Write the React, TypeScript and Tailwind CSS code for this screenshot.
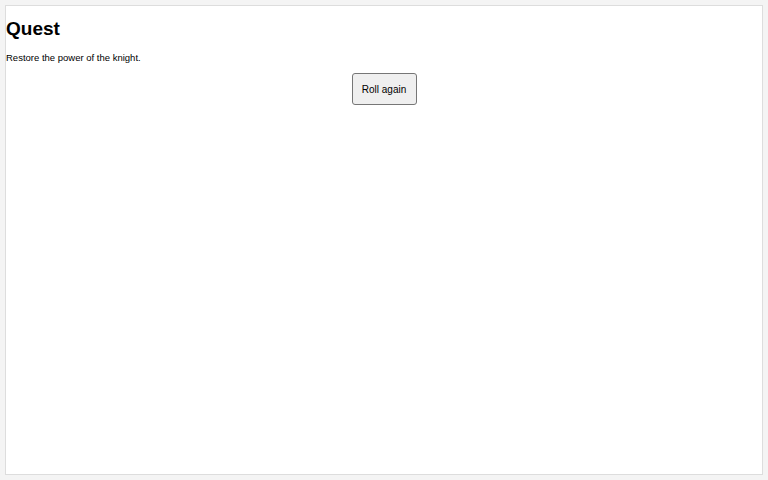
import React from 'react';

export default function App() {
  return (
    <div className="min-h-screen bg-[#f4f4f4] p-[5px]" style={{ fontFamily: '"Liberation Sans", Arial, sans-serif' }}>
      <div className="h-[470px] border border-[#dddddd] bg-white">
        <h1 className="mt-[12px] text-[19px] font-bold leading-[22px] text-black">Quest</h1>
        <p className="mt-[12px] text-[9.5px] leading-[11px] text-black">Restore the power of the knight.</p>
        <div className="mt-[10px] flex justify-center">
          <button className="h-[32px] w-[65px] rounded-[3px] border border-[#767676] bg-[#efefef] text-[10px] text-black">
            Roll again
          </button>
        </div>
      </div>
    </div>
  );
}
